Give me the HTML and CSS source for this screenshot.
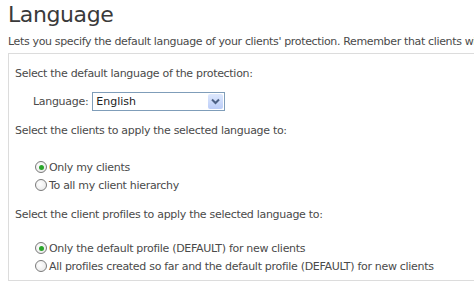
FILE: index.html
```html
<!DOCTYPE html>
<html lang="en">
<head>
  <meta charset="UTF-8" />
  <title>Language</title>
  <link rel="stylesheet" href="styles.css">
</head>
<body>
  <h1 class="title">Language</h1>
  <p class="intro">Lets you specify the default language of your clients' protection. Remember that clients will only see the change once they have been updated.</p>

  <div class="panel">
    <p class="question">Select the default language of the protection:</p>
    <div class="field-row">
      <span class="field-label">Language:</span>
      <span class="select">
        <span class="select-value">English</span>
        <span class="select-btn">
          <svg width="9" height="7" viewBox="0 0 9 7"><path d="M1 1.5 L4.5 5 L8 1.5" fill="none" stroke="#4d6185" stroke-width="2"/></svg>
        </span>
      </span>
    </div>

    <p class="question">Select the clients to apply the selected language to:</p>
    <div class="options">
      <label class="option"><span class="radio checked"></span>Only my clients</label>
      <label class="option"><span class="radio"></span>To all my client hierarchy</label>
    </div>

    <p class="question second">Select the client profiles to apply the selected language to:</p>
    <div class="options last">
      <label class="option"><span class="radio checked"></span>Only the default profile (DEFAULT) for new clients</label>
      <label class="option"><span class="radio"></span>All profiles created so far and the default profile (DEFAULT) for new clients</label>
    </div>
  </div>
</body>
</html>
```

FILE: styles.css
```css
html, body {
  overflow: hidden;
}
body {
  margin: 0 0 0 8px;
  font-family: "DejaVu Sans", Verdana, sans-serif;
  font-size: 11px;
  letter-spacing: -0.3px;
  color: #4a4a4a;
  background: #fff;
}
.title {
  margin: 0;
  font-size: 22px;
  font-weight: normal;
  letter-spacing: -0.4px;
  line-height: 30px;
  color: #3a3a3a;
}
.intro {
  margin: 4px 0 0;
  line-height: 16px;
  white-space: nowrap;
  letter-spacing: -0.35px;
}
.panel {
  width: 560px;
  margin-top: 3px;
  border: 1px solid #dcdcdc;
  border-right: none;
  padding: 11px 6px 5px;
}
.question {
  margin: 0;
  line-height: 18px;
}
.question.second {
  margin-top: 2px;
}
.field-row {
  display: flex;
  align-items: center;
  gap: 4px;
  margin: 9px 0 11px 18px;
}
.select {
  display: flex;
  align-items: center;
  width: 127px;
  height: 17px;
  border: 1px solid #7f9db9;
  background: #fff;
  padding: 0 1px 0 3px;
  letter-spacing: 0;
}
.select-value {
  flex: 1;
  color: #222;
}
.select-btn {
  display: flex;
  align-items: center;
  justify-content: center;
  width: 15px;
  height: 15px;
  background: linear-gradient(#dde8fd, #bccdf8);
  border-radius: 2px;
}
.options {
  margin: 18px 0 12px 20px;
}
.options.last {
  margin: 15px 0 0 20px;
}
.option {
  display: flex;
  align-items: center;
  height: 18px;
  gap: 2px;
}
.radio {
  box-sizing: border-box;
  width: 12px;
  height: 12px;
  border: 1px solid #7a7a7a;
  border-radius: 50%;
  background: radial-gradient(circle at 40% 40%, #fff, #e4e4e4);
  position: relative;
}
.radio.checked::after {
  content: "";
  position: absolute;
  left: 2.5px;
  top: 2.5px;
  width: 5px;
  height: 5px;
  border-radius: 50%;
  background: #2aa52a;
}
```
